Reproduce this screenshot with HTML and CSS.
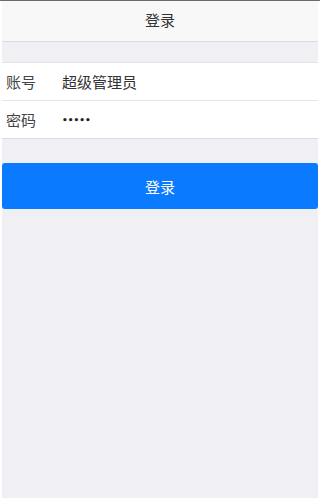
FILE: index.html
```html
<!DOCTYPE html>
<html lang="zh-CN">
<head>
<meta charset="utf-8">
<title>登录</title>
<link rel="stylesheet" href="styles.css">
</head>
<body>
<div class="screen">
  <header class="nav">登录</header>
  <div class="form">
    <div class="row">
      <span class="label">账号</span>
      <span class="value">超级管理员</span>
    </div>
    <div class="row">
      <span class="label">密码</span>
      <span class="value dots">•••••</span>
    </div>
  </div>
  <div class="actions">
    <button class="btn" type="button">登录</button>
  </div>
</div>
</body>
</html>
```
FILE: styles.css
```css
html, body {
  margin: 0;
  padding: 0;
  background: #ffffff;
  height: 100%;
}
body {
  font-family: "Noto Sans CJK SC", "Noto Sans", sans-serif;
  color: #333;
  border-top: 1px solid #6a6a6a;
  box-sizing: border-box;
  padding: 0 2px 2px 2px;
}
.screen {
  background: #efeff4;
  height: 100%;
  display: flex;
  flex-direction: column;
}
.nav {
  height: 41px;
  box-sizing: border-box;
  padding-bottom: 4px;
  background: #f8f8f8;
  border-bottom: 1px solid #dcdce0;
  display: flex;
  align-items: center;
  justify-content: center;
  font-size: 15px;
  color: #333;
}
.form {
  margin-top: 20px;
  background: #fff;
  border-top: 1px solid #e4e4e8;
  border-bottom: 1px solid #dcdce0;
}
.row {
  height: 37px;
  display: flex;
  align-items: center;
  padding-left: 4px;
  font-size: 15px;
}
.row + .row {
  border-top: 1px solid #e6e6ea;
}
.label {
  width: 56px;
  color: #444;
}
.value {
  color: #333;
}
.dots {
  font-size: 9px;
  font-weight: bold;
  letter-spacing: 0;
  font-family: "DejaVu Sans", sans-serif;
  color: #222;
}
.actions {
  padding-top: 24px;
}
.btn {
  display: block;
  width: 100%;
  height: 46px;
  border: none;
  border-radius: 3px;
  background: #0a7bff;
  color: #fff;
  font-family: "Noto Sans CJK SC", "Noto Sans", sans-serif;
  font-size: 15px;
}
```
